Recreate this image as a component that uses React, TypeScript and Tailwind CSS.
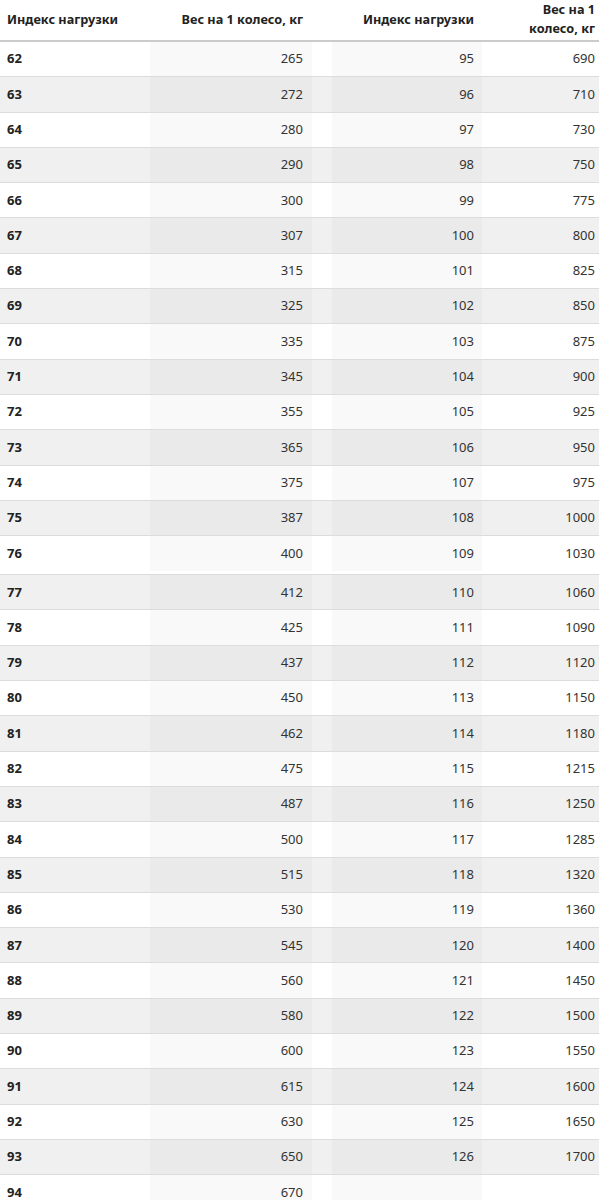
const left: [number, number][] = [
  [62, 265], [63, 272], [64, 280], [65, 290], [66, 300], [67, 307], [68, 315], [69, 325],
  [70, 335], [71, 345], [72, 355], [73, 365], [74, 375], [75, 387], [76, 400], [77, 412],
  [78, 425], [79, 437], [80, 450], [81, 462], [82, 475], [83, 487], [84, 500], [85, 515],
  [86, 530], [87, 545], [88, 560], [89, 580], [90, 600], [91, 615], [92, 630], [93, 650],
  [94, 670],
];

const right: [number, number][] = [
  [95, 690], [96, 710], [97, 730], [98, 750], [99, 775], [100, 800], [101, 825], [102, 850],
  [103, 875], [104, 900], [105, 925], [106, 950], [107, 975], [108, 1000], [109, 1030], [110, 1060],
  [111, 1090], [112, 1120], [113, 1150], [114, 1180], [115, 1215], [116, 1250], [117, 1285], [118, 1320],
  [119, 1360], [120, 1400], [121, 1450], [122, 1500], [123, 1550], [124, 1600], [125, 1650], [126, 1700],
];

const cols = "grid grid-cols-[150px_162px_20px_150px_117px]";

export default function App() {
  return (
    <div
      className="w-[599px] bg-white text-[13px] text-[#333]"
      style={{ fontFamily: "'Noto Sans', Lato, sans-serif" }}
    >
      <div className={`${cols} h-[42px] items-center pb-[10px] border-b-2 border-[#cbcbcb] font-bold text-[12.7px] text-[#222] leading-[19px]`}>
        <div className="pl-[7px]">Индекс нагрузки</div>
        <div className="pr-[9px] text-right">Вес на 1 колесо, кг</div>
        <div />
        <div className="pr-[8px] text-right">Индекс нагрузки</div>
        <div className="pr-[4px] text-right">
          Вес на 1
          <br />
          колесо, кг
        </div>
      </div>
      {left.map(([idx, kg], i) => {
        const r = right[i];
        const odd = i % 2 === 1;
        const tall = idx === 76;
        const shade = odd ? "bg-[#eaeaea]" : "bg-[#f9f9f9]";
        return (
          <div
            key={idx}
            className={`${cols} border-b border-[#dcdcdc] ${odd ? "bg-[#f0f0f0]" : "bg-white"} ${tall ? "h-[39px] pb-[3px]" : "h-[35.3px]"}`}
          >
            <div className="pl-[7px] flex items-center font-bold text-[#222]">{idx}</div>
            <div className={`${shade} pr-[9px] flex items-center justify-end`}>{kg}</div>
            <div />
            <div className={`${shade} pr-[8px] flex items-center justify-end`}>{r ? r[0] : ""}</div>
            <div className="pr-[4px] flex items-center justify-end">{r ? r[1] : ""}</div>
          </div>
        );
      })}
    </div>
  );
}
